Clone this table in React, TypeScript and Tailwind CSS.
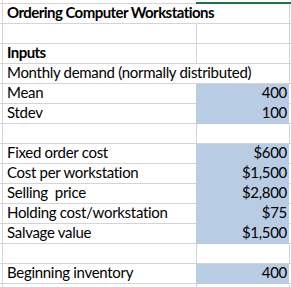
import React from "react";

type Row = {
  label?: string;
  value?: string;
  bold?: boolean;
  blue?: boolean;
  overflow?: boolean;
};

const rows: Row[] = [
  { label: "Ordering Computer Workstations", bold: true, overflow: true },
  {},
  { label: "Inputs", bold: true },
  { label: "Monthly demand (normally distributed)", overflow: true },
  { label: "Mean", value: "400", blue: true },
  { label: "Stdev", value: "100", blue: true },
  {},
  { label: "Fixed order cost", value: "$600", blue: true },
  { label: "Cost per workstation", value: "$1,500", blue: true },
  { label: "Selling  price", value: "$2,800", blue: true },
  { label: "Holding cost/workstation", value: "$75", blue: true },
  { label: "Salvage value", value: "$1,500", blue: true },
  {},
  { label: "Beginning inventory", value: "400", blue: true },
  {},
];

function SheetRow({ row }: { row: Row }) {
  const colB = row.blue
    ? "bg-[#b8cce4] border-l-[#b8cce4] border-b-[#b8cce4] border-r-white"
    : row.overflow
    ? "bg-white border-l-white border-b-[#d4d4d4] border-r-[#d4d4d4]"
    : "bg-white border-l-[#d4d4d4] border-b-[#d4d4d4] border-r-[#d4d4d4]";
  return (
    <div className="flex h-5">
      <div className="w-[2px] shrink-0 border-b border-b-[#d4d4d4]" />
      <div className="relative z-10 flex w-[194px] shrink-0 items-end border-l border-b border-[#d4d4d4] pb-[3px] pl-[4px]">
        <span
          className={`whitespace-pre leading-[15px] text-black ${
            row.bold
              ? "font-bold tracking-[-0.55px]"
              : "font-normal tracking-[-0.3px]"
          }`}
        >
          {row.label ?? ""}
        </span>
      </div>
      <div
        className={`flex w-[94px] shrink-0 items-end justify-end border-l border-b border-r pb-[3px] pr-[2px] ${colB}`}
      >
        <span className="leading-[15px] tracking-[-0.3px] text-black">
          {row.value ?? ""}
        </span>
      </div>
      <div className="flex-1 border-b border-b-[#d4d4d4]" />
    </div>
  );
}

export default function App() {
  return (
    <div
      className="h-[287px] w-[291px] overflow-hidden bg-white text-[15px]"
      style={{ fontFamily: "Lato, 'Noto Sans', sans-serif" }}
    >
      {/* strip of the row above, with the active-cell border */}
      <div className="flex h-[4px]">
        <div className="w-[2px] shrink-0 border-b border-b-[#d4d4d4]" />
        <div className="w-[194px] shrink-0 border-l border-b border-[#d4d4d4]" />
        <div className="flex-1 border-b-2 border-b-[#217346]" />
      </div>
      {rows.map((r, i) => (
        <SheetRow key={i} row={r} />
      ))}
    </div>
  );
}
